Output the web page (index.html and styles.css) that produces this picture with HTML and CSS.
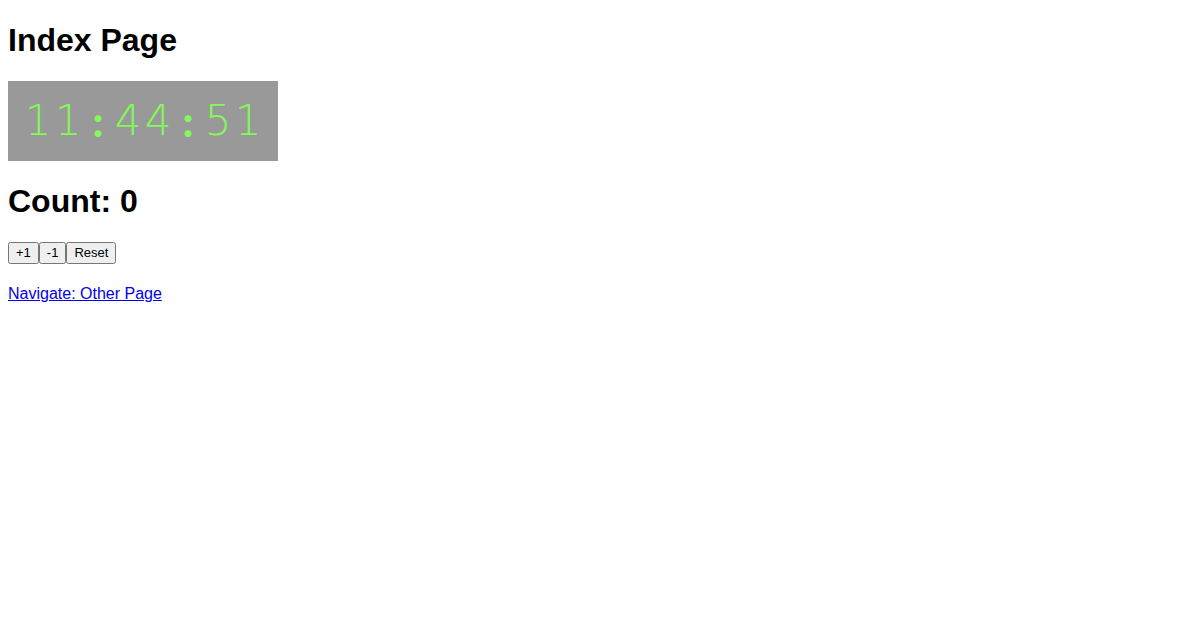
FILE: index.html
```html
<!DOCTYPE html>
<html lang="en">
  <head>
    <meta charset="UTF-8" />
    <meta name="viewport" content="width=device-width, initial-scale=1.0" />
    <title>Index Page</title>
    <link rel="stylesheet" href="styles.css">
  </head>
  <body>
    <h1>Index Page</h1>
    <div class="clock"><span>1</span><span>1</span><span class="colon">:</span><span>4</span><span>4</span><span class="colon">:</span><span>5</span><span>1</span></div>
    <h1>Count: <span id="count">0</span></h1>
    <div class="buttons">
      <button type="button" id="inc">+1</button>
      <button type="button" id="dec">-1</button>
      <button type="button" id="reset">Reset</button>
    </div>
    <nav>
      <a href="/other">Navigate: Other Page</a>
    </nav>

    <script>
      const count = document.getElementById("count");
      let value = 0;

      function setCount(n) {
        value = n;
        count.textContent = value;
      }

      document.getElementById("inc").addEventListener("click", () => setCount(value + 1));
      document.getElementById("dec").addEventListener("click", () => setCount(value - 1));
      document.getElementById("reset").addEventListener("click", () => setCount(0));
    </script>
  </body>
</html>
```
FILE: styles.css
```css
body {
  margin: 0 8px;
  font-family: "Liberation Sans", Arial, sans-serif;
}
h1 {
  margin: 21px 0;
  font-size: 32px;
  line-height: 39px;
}
.clock {
  display: flex;
  width: fit-content;
  padding: 15px;
  font: 200 42px/50px "DejaVu Sans Light", "DejaVu Sans", sans-serif;
  color: #82fa58;
  background: #999;
}
.clock span {
  width: 30px;
  text-align: center;
}
.clock .colon {
  font-family: Lato, sans-serif;
  font-weight: 900;
}
.buttons {
  display: flex;
}
button {
  font-size: 13px;
  line-height: 16px;
}
nav {
  margin-top: 20px;
  line-height: 20px;
}
```
